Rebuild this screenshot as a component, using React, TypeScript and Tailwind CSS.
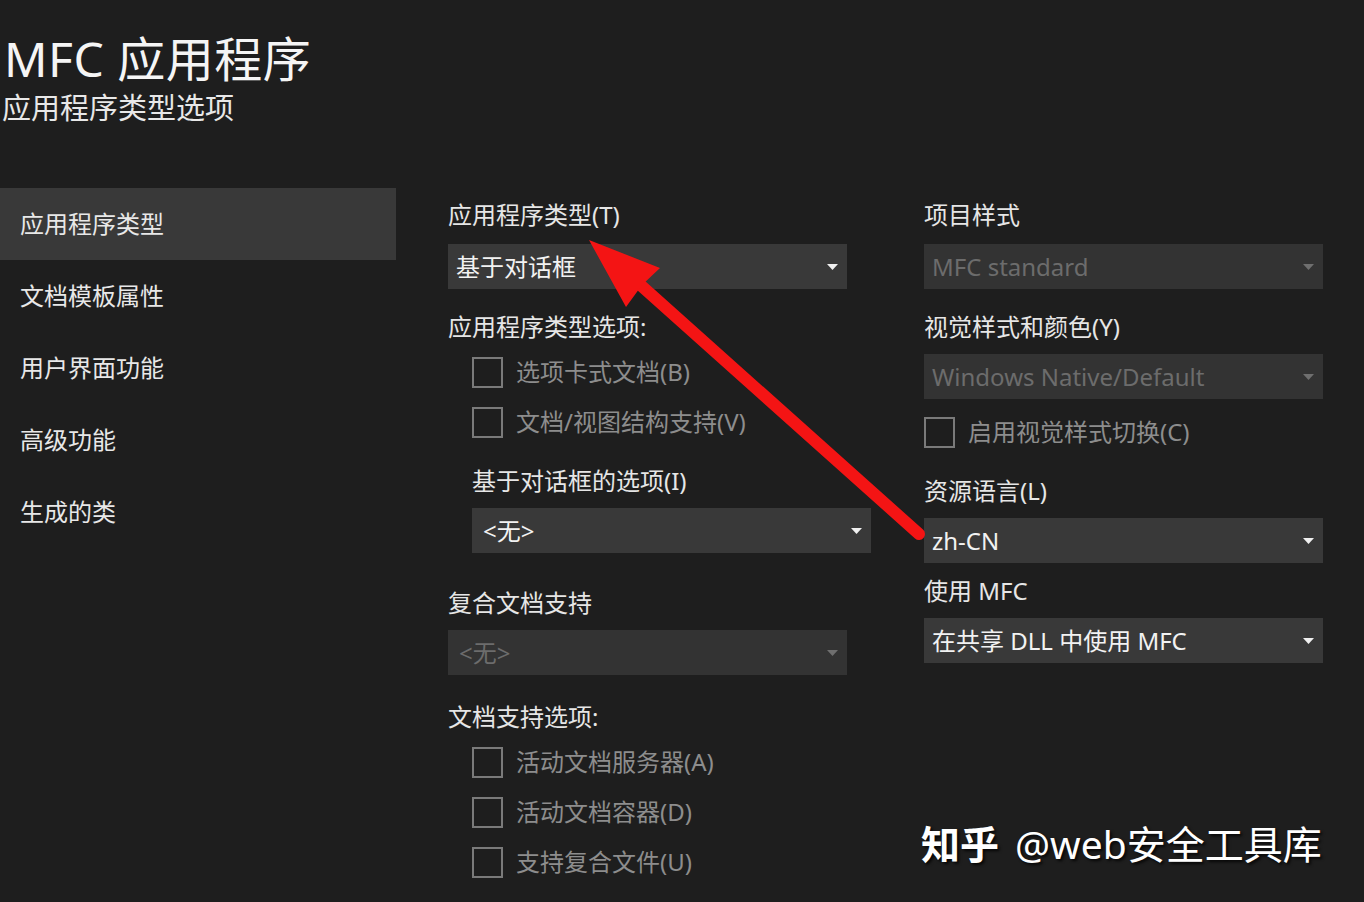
const sidebarItems = ["应用程序类型", "文档模板属性", "用户界面功能", "高级功能", "生成的类"];

function Caret({ dim }: { dim?: boolean }) {
  return (
    <svg width="11" height="6" viewBox="0 0 11 6" className="shrink-0">
      <path d="M0 0 H11 L5.5 6 Z" fill={dim ? "#6f6f6f" : "#f0f0f0"} />
    </svg>
  );
}

function Dropdown({ text, disabled, className = "" }: { text: string; disabled?: boolean; className?: string }) {
  return (
    <div
      className={`flex h-[45px] w-[399px] items-center justify-between pl-2 pr-[9px] text-[24px] ${
        disabled ? "bg-[#333333] text-[#6c6c6c]" : "bg-[#393939] text-[#f2f2f2]"
      } ${className}`}
    >
      <span className="leading-none">{text}</span>
      <Caret dim={disabled} />
    </div>
  );
}

function Label({ text, className = "" }: { text: string; className?: string }) {
  return <div className={`h-8 text-[24px] leading-8 text-[#e6e6e6] ${className}`}>{text}</div>;
}

function Check({ text, className = "" }: { text: string; className?: string }) {
  return (
    <div className={`flex items-center ${className}`}>
      <div className="h-[31px] w-[31px] shrink-0 border-2 border-[#7a7a7a]" />
      <span className="ml-[13px] text-[24px] leading-8 text-[#8d8d8d]">{text}</span>
    </div>
  );
}

export default function App() {
  return (
    <div className="relative h-[902px] w-[1364px] overflow-hidden bg-[#1e1e1e] font-[family-name:'Noto_Sans','Noto_Sans_CJK_SC',sans-serif] text-white">
      <header className="pl-1 pt-[35px]">
        <h1 className="text-[48px] leading-none tracking-[0.5px] text-[#f5f5f5]">MFC 应用程序</h1>
        <p className="-ml-[2px] mt-[10px] text-[29px] leading-none text-[#e8e8e8]">应用程序类型选项</p>
      </header>

      <div className="mt-[66px] flex gap-[52px]">
        <nav className="w-[396px]">
          {sidebarItems.map((item, i) => (
            <div
              key={item}
              className={`flex h-[72px] items-center pl-5 text-[24px] text-[#e8e8e8] ${i === 0 ? "bg-[#393939]" : ""}`}
            >
              {item}
            </div>
          ))}
        </nav>

        <section className="flex w-[424px] flex-col pt-[11px]">
          <Label text="应用程序类型(T)" />
          <Dropdown text="基于对话框" className="mt-[13px]" />
          <Label text="应用程序类型选项:" className="mt-[22px]" />
          <div className="mt-1 pl-6">
            <Check text="选项卡式文档(B)" className="h-[50px]" />
            <Check text="文档/视图结构支持(V)" className="h-[50px]" />
          </div>
          <Label text="基于对话框的选项(I)" className="ml-6 mt-[18px]" />
          <Dropdown text="<无>" className="ml-6 mt-[11px] pl-[11px]" />
          <Label text="复合文档支持" className="mt-[34px]" />
          <Dropdown text="<无>" disabled className="mt-[11px] pl-[11px]" />
          <Label text="文档支持选项:" className="mt-[26px]" />
          <div className="mt-1 pl-6">
            <Check text="活动文档服务器(A)" className="h-[50px]" />
            <Check text="活动文档容器(D)" className="h-[50px]" />
            <Check text="支持复合文件(U)" className="h-[50px]" />
          </div>
        </section>

        <section className="flex w-[400px] flex-col pt-[11px]">
          <Label text="项目样式" />
          <Dropdown text="MFC standard" disabled className="mt-[13px]" />
          <Label text="视觉样式和颜色(Y)" className="mt-[22px]" />
          <Dropdown text="Windows Native/Default" disabled className="mt-[11px]" />
          <Check text="启用视觉样式切换(C)" className="mt-[17px] h-8" />
          <Label text="资源语言(L)" className="mt-[27px]" />
          <Dropdown text="zh-CN" className="mt-[11px]" />
          <Label text="使用 MFC" className="mt-3" />
          <Dropdown text="在共享 DLL 中使用 MFC" className="mt-[11px]" />
        </section>
      </div>

      {/* annotation arrow */}
      <svg className="pointer-events-none absolute inset-0" width="1364" height="902" viewBox="0 0 1364 902">
        <line x1="636" y1="281" x2="919" y2="534" stroke="#f41414" strokeWidth="12" strokeLinecap="round" />
        <polygon points="589,240 660,268 642,285 626,307" fill="#f41414" />
      </svg>

      <div className="absolute left-[921px] top-[824px] text-[39px] leading-none text-white [text-shadow:2px_2px_3px_rgba(0,0,0,0.8)]">
        <span className="font-bold">知乎</span>
        <span className="ml-4">@web安全工具库</span>
      </div>
    </div>
  );
}
